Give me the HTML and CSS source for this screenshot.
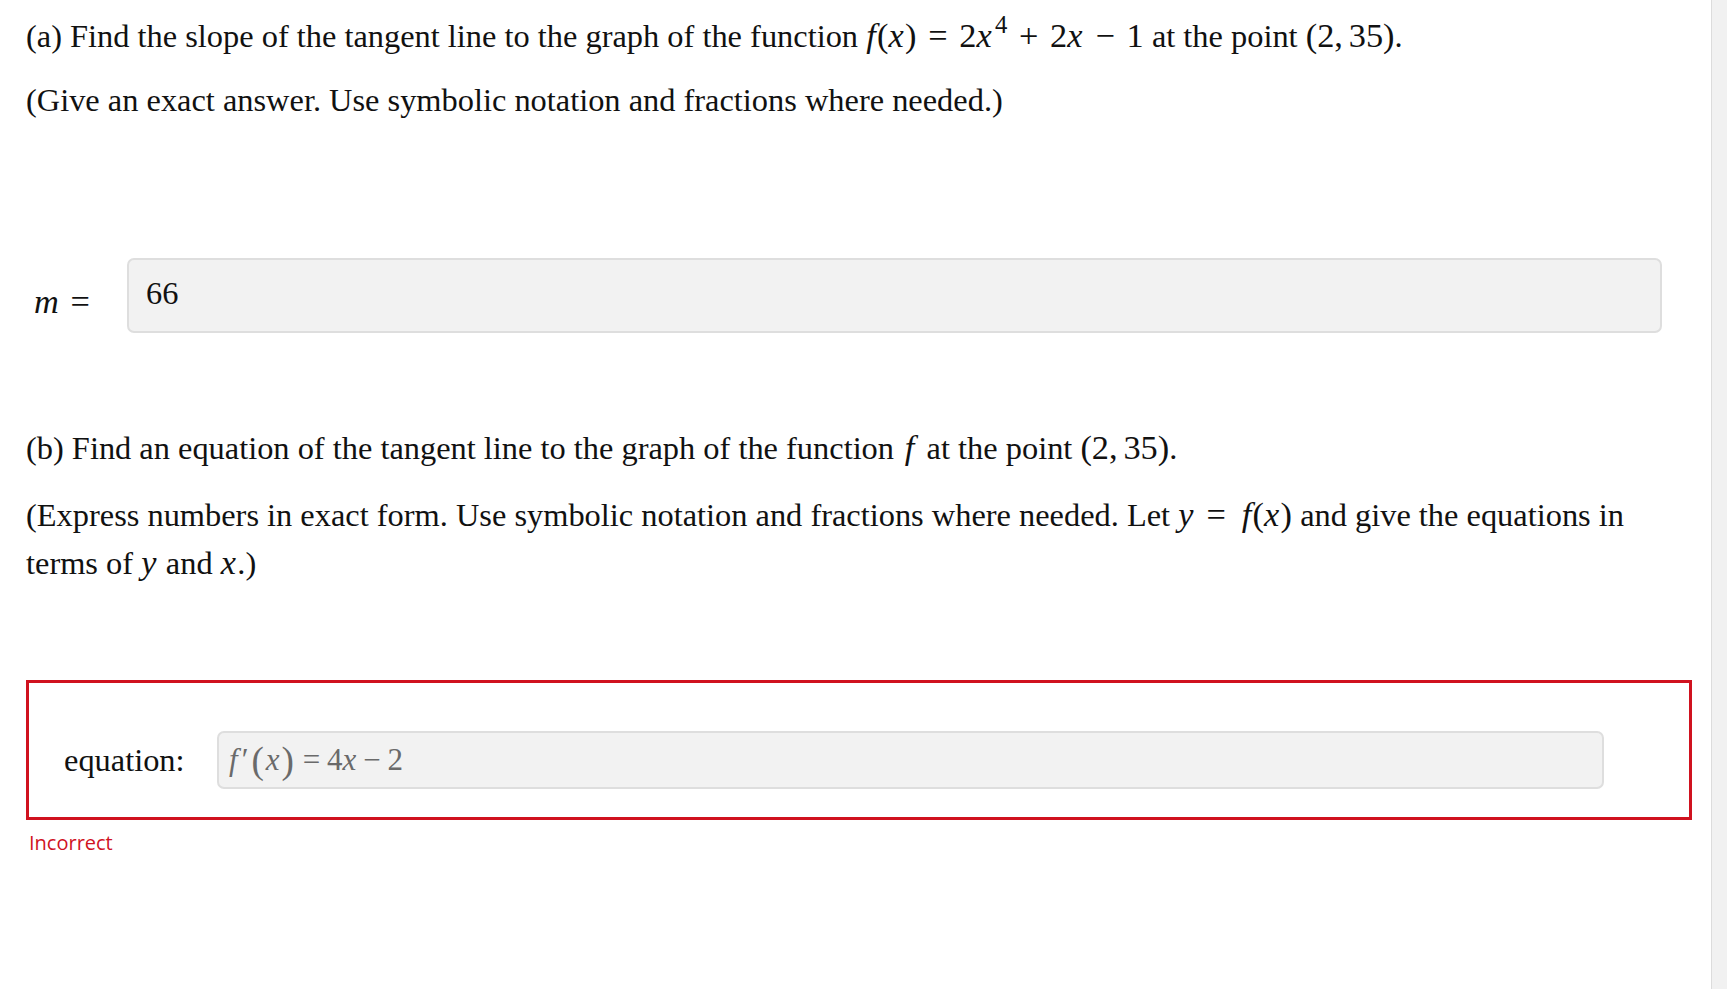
FILE: index.html
```html
<!DOCTYPE html>
<html lang="en">
<head>
    <meta charset="UTF-8">
    <meta name="viewport" content="width=device-width, initial-scale=1.0">
    <title>Tangent line</title>
    <link rel="stylesheet" href="styles.css">
</head>
<body>

<div class="page">
    <main class="content">
        <p class="prompt">(a) Find the slope of the tangent line to the graph of the function
            <span class="math"><i>f</i>(<i>x</i>)<span class="op">=</span>2<i>x</i><sup>4</sup><span class="op">+</span>2<i>x</i><span class="op">&minus;</span>1</span>
            at the point <span class="math">(2,<span class="thin"></span>35)</span>.</p>
        <p class="prompt">(Give an exact answer. Use symbolic notation and fractions where needed.)</p>

        <div class="answer-row slope-row">
            <span class="answer-label math"><i>m</i><span class="op">=</span></span>
            <div class="answer-box">66</div>
        </div>

        <p class="prompt part-b">(b) Find an equation of the tangent line to the graph of the function <span class="math fn-sym"><i>f</i></span> at the point <span class="math">(2,<span class="thin"></span>35)</span>.</p>
        <p class="prompt">(Express numbers in exact form. Use symbolic notation and fractions where needed. Let <span class="math"><i>y</i><span class="op">=</span><i class="fn-lead">f</i>(<i>x</i>)</span> and give the equations in terms of <span class="math"><i>y</i></span> and <span class="math"><i>x</i></span>.)</p>

        <div class="answer-frame incorrect">
            <div class="answer-row">
                <span class="answer-label text-label">equation:</span>
                <div class="answer-box entered"><i>f</i><span class="prime">&prime;</span><span class="paren">(</span><i>x</i><span class="paren">)</span><span class="eq">=</span>4<i>x</i><span class="eq">&minus;</span>2</div>
            </div>
        </div>
        <div class="feedback">Incorrect</div>
    </main>
    <div class="scrollbar"></div>
</div>

</body>
</html>
```

FILE: styles.css
```css
html, body {
    margin: 0;
    padding: 0;
    background-color: #fff;
    overflow: hidden;
}
.page {
    display: flex;
    min-height: 100vh;
}
.content {
    flex: 1;
    padding: 12px 19px 0 26px;
    font-family: "Liberation Serif", "Times New Roman", serif;
    font-size: 32.4px;
    color: #111;
}
.scrollbar {
    width: 15px;
    background-color: #f1f1f1;
    border-left: 1px solid #dcdcdc;
}
.prompt {
    margin: 0 0 16px;
    line-height: 48px;
}
.part-b {
    margin-bottom: 19px;
}
.math {
    white-space: nowrap;
    font-size: 1.06em;
    line-height: 0;
}
.math i {
    font-style: italic;
    margin-right: 0.04em;
}
.math .fn-lead {
    margin-left: 0.12em;
}
.fn-sym {
    padding: 0 0.08em;
}
.math sup {
    font-size: 0.72em;
    vertical-align: 0.58em;
    line-height: 0;
    margin-left: 2px;
}
.op {
    padding: 0 0.34em;
}
.thin {
    display: inline-block;
    width: 0.17em;
}
.answer-row {
    display: flex;
    align-items: center;
}
.slope-row {
    margin: 134px 30px 91px 0;
}
.answer-label {
    width: 101px;
    padding-left: 8px;
    box-sizing: border-box;
    margin-top: 11px;
    line-height: normal;
}
.answer-label .op {
    padding: 0 0 0 0.3em;
}
.answer-box {
    flex: 1;
    height: 75px;
    box-sizing: border-box;
    padding: 0 17px 4px;
    display: flex;
    align-items: center;
    background-color: #f2f2f2;
    border: 2px solid #dedede;
    border-radius: 7px;
    font-family: "Liberation Serif", "Times New Roman", serif;
}
.answer-frame {
    margin-top: 93px;
    border: 3px solid #d0121f;
    padding: 48px 85px 28px 35px;
}
.text-label {
    width: 153px;
    padding-left: 0;
    margin-top: 0;
}
.answer-box.entered {
    height: 58px;
    padding: 0 10px 0;
    font-size: 31px;
    color: #6a6a6a;
}
.entered i {
    font-style: italic;
}
.prime {
    margin: 0 1px 0 4px;
}
.paren {
    font-size: 1.2em;
    padding: 0 2px;
}
.eq {
    padding: 0 0.22em;
}
.feedback {
    margin-top: 9px;
    padding-left: 3px;
    font-family: "Open Sans", "Noto Sans", sans-serif;
    font-size: 20px;
    color: #d0121f;
}
```
